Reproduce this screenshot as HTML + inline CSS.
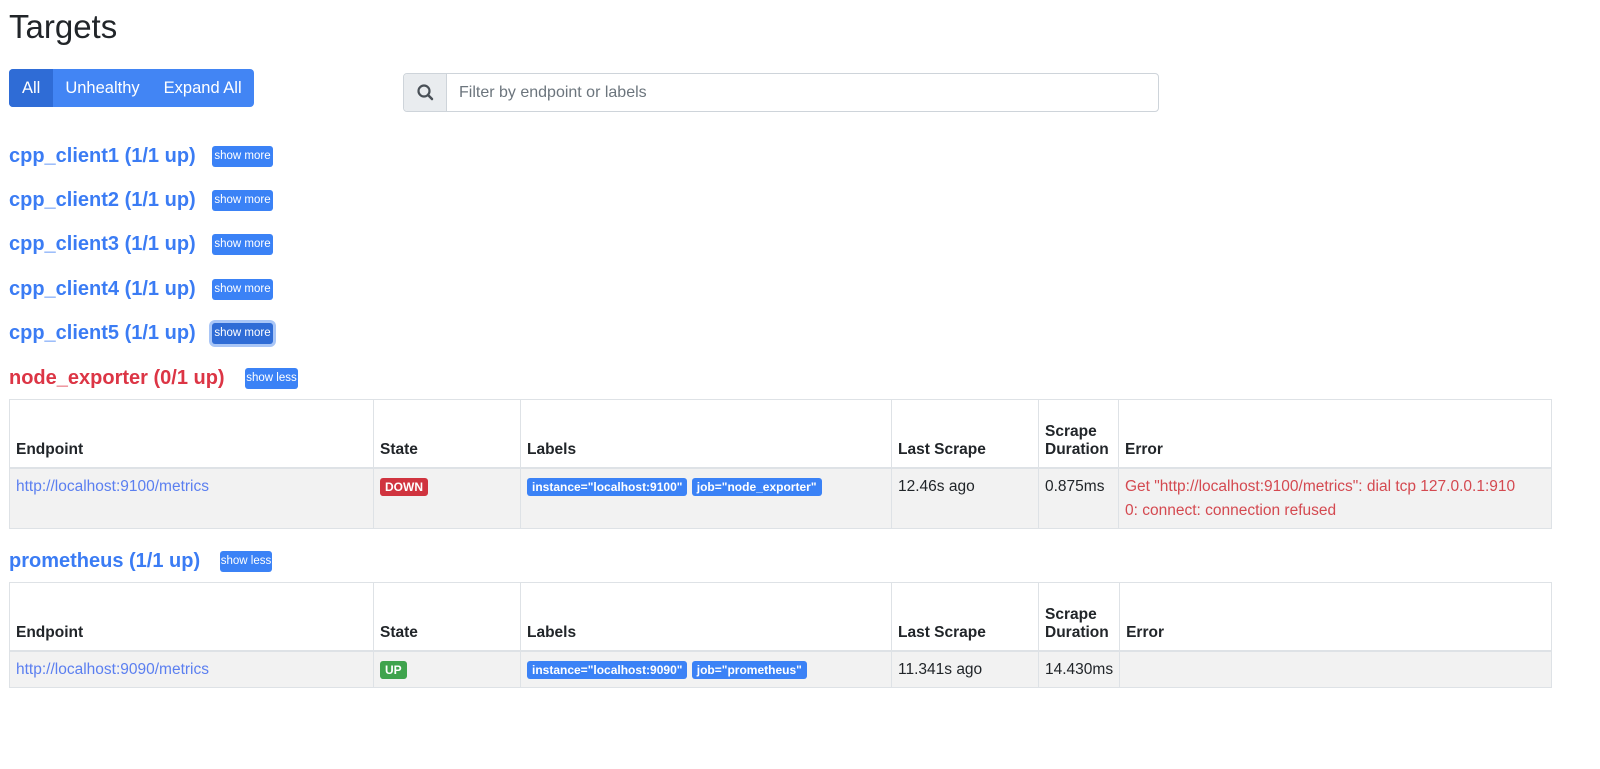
<!DOCTYPE html>
<html><head><style>
body{margin:0;background:#fff;font-family:"Liberation Sans",sans-serif;color:#212529;width:1600px;height:769px;overflow:hidden;position:relative}
.a{position:absolute}
h1{position:absolute;left:9px;top:8px;margin:0;font-size:33px;font-weight:500}
.grp{left:9px;top:69px;height:38px;display:flex;border-radius:4px;overflow:hidden;background:#4285f4;width:245px}
.grp div{color:#fff;font-size:16.5px;line-height:38px;padding:0 12px}
.grp .act{background:#2f6cd6;padding:0 13px}
.search{left:403px;top:73px;width:754px;height:37px;border:1px solid #ced4da;border-radius:4px;overflow:hidden}
.search .ic{position:absolute;left:0;top:0;width:42px;height:37px;background:#e9ecef;border-right:1px solid #ced4da}
.search span{position:absolute;left:55px;top:10px;font-size:16px;color:#6c757d}
.h{font-size:20px;font-weight:bold;color:#3b7cf4;left:9px}
.h.r{color:#dc3545}
.btn{background:#3b82f6;color:#fff;font-size:11.5px;border-radius:3px;height:21px;line-height:21px;text-align:center}
table{position:absolute;left:9px;border-collapse:collapse;width:1543px;font-size:15.5px}
td,th{border:1px solid #dee2e6;padding:0 6px;vertical-align:bottom;text-align:left}
th{height:59px;padding-bottom:8px;border-bottom:2px solid #dee2e6}
tbody tr{background:#f2f2f2}
tbody td{vertical-align:top;padding-top:9px}
.lk{color:#5b7ff0}
.bd{display:inline-block;color:#fff;font-size:12px;font-weight:bold;padding:2px 5px;border-radius:3px;line-height:14px}
.err{color:#d44950;line-height:24px}
</style></head><body>
<h1>Targets</h1>
<div class="a grp"><div class="act">All</div><div>Unhealthy</div><div>Expand All</div></div>
<div class="a search"><div class="ic"><svg width="42" height="37"><circle cx="20" cy="17" r="5.5" fill="none" stroke="#495057" stroke-width="2.2"/><line x1="24" y1="21" x2="28" y2="25" stroke="#495057" stroke-width="2.5" stroke-linecap="round"/></svg></div><span>Filter by endpoint or labels</span></div>

<div class="a h" style="top:145px">cpp_client1 (1/1 up)</div><div class="a btn" style="left:212px;top:146px;width:61px">show more</div>
<div class="a h" style="top:189px">cpp_client2 (1/1 up)</div><div class="a btn" style="left:212px;top:190px;width:61px">show more</div>
<div class="a h" style="top:233px">cpp_client3 (1/1 up)</div><div class="a btn" style="left:212px;top:234px;width:61px">show more</div>
<div class="a h" style="top:278px">cpp_client4 (1/1 up)</div><div class="a btn" style="left:212px;top:279px;width:61px">show more</div>
<div class="a h" style="top:322px">cpp_client5 (1/1 up)</div><div class="a btn" style="left:212px;top:323px;width:61px;background:#2f6cd6;box-shadow:0 0 0 3px #a9c6f7">show more</div>
<div class="a h r" style="top:367px">node_exporter (0/1 up)</div><div class="a btn" style="left:245px;top:368px;width:53px">show less</div>

<table style="top:399px"><thead><tr><th style="width:351px">Endpoint</th><th style="width:134px">State</th><th style="width:358px">Labels</th><th style="width:134px">Last Scrape</th><th style="width:67px">Scrape Duration</th><th>Error</th></tr></thead>
<tbody><tr style="height:60px"><td class="lk">http://localhost:9100/metrics</td><td><span class="bd" style="background:#d0343f">DOWN</span></td><td><span class="bd" style="background:#3b82f6">instance="localhost:9100"</span> <span class="bd" style="background:#3b82f6">job="node_exporter"</span></td><td>12.46s ago</td><td>0.875ms</td><td class="err" style="padding-top:6px">Get "http://localhost:9100/metrics": dial tcp 127.0.0.1:910<br>0: connect: connection refused</td></tr></tbody></table>

<div class="a h" style="top:550px">prometheus (1/1 up)</div><div class="a btn" style="left:220px;top:551px;width:52px">show less</div>

<table style="top:582px"><thead><tr><th style="width:351px">Endpoint</th><th style="width:134px">State</th><th style="width:358px">Labels</th><th style="width:134px">Last Scrape</th><th style="width:67px">Scrape Duration</th><th>Error</th></tr></thead>
<tbody><tr style="height:36px"><td class="lk">http://localhost:9090/metrics</td><td><span class="bd" style="background:#3fa34d">UP</span></td><td><span class="bd" style="background:#3b82f6">instance="localhost:9090"</span> <span class="bd" style="background:#3b82f6">job="prometheus"</span></td><td>11.341s ago</td><td>14.430ms</td><td></td></tr></tbody></table>
</body></html>
